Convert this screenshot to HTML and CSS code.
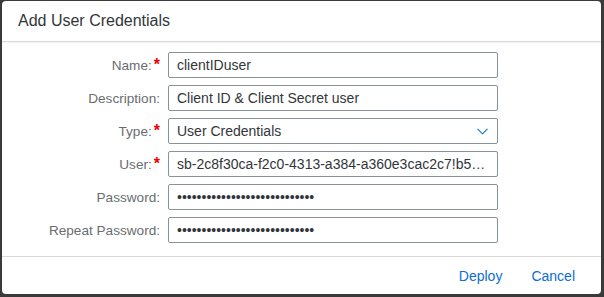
FILE: index.html
```html
<!DOCTYPE html>
<html lang="en">
<head>
    <meta charset="UTF-8">
    <meta name="viewport" content="width=device-width, initial-scale=1.0">
    <title>Add User Credentials</title>
    <link rel="stylesheet" href="styles.css">
</head>
<body>
    <div class="dialog">
        <header class="dialog-header">
            <h1>Add User Credentials</h1>
        </header>

        <section class="form">
            <label class="label">Name:<span class="req">*</span></label>
            <input class="field" type="text" value="clientIDuser" readonly>

            <label class="label">Description:</label>
            <input class="field" type="text" value="Client ID &amp; Client Secret user" readonly>

            <label class="label">Type:<span class="req">*</span></label>
            <div class="field select">
                <span>User Credentials</span>
                <svg class="chevron" width="11" height="7" viewBox="0 0 11 7">
                    <path d="M0.5 0.8 L5.5 5.8 L10.5 0.8" fill="none" stroke="#0a6ed1" stroke-width="1.1"/>
                </svg>
            </div>

            <label class="label">User:<span class="req">*</span></label>
            <input class="field" type="text" value="sb-2c8f30ca-f2c0-4313-a384-a360e3cac2c7!b54321|it-rt-tenant!b117" readonly>

            <label class="label">Password:</label>
            <input class="field" type="password" value="abcdefghijklmnopqrstuvwxyz12" readonly>

            <label class="label">Repeat Password:</label>
            <input class="field" type="password" value="abcdefghijklmnopqrstuvwxyz12" readonly>
        </section>

        <footer class="dialog-footer">
            <button class="btn">Deploy</button>
            <button class="btn">Cancel</button>
        </footer>
    </div>
</body>
</html>
```

FILE: styles.css
```css
html, body {
    margin: 0;
    padding: 0;
    height: 100%;
}

body {
    background-color: #3a3a3a;
    font-family: "Liberation Sans", Arial, sans-serif;
    color: #32363a;
    overflow: hidden;
}

.dialog {
    margin: 1px 3px 3px 2px;
    height: 293px;
    background-color: #fff;
    border-radius: 4px;
    display: flex;
    flex-direction: column;
}

.dialog-header {
    height: 40px;
    padding: 0 16px;
    display: flex;
    align-items: center;
    border-bottom: 1px solid #d9d9d9;
    box-shadow: 0 1px 1px rgba(0, 0, 0, 0.04);
}

.dialog-header h1 {
    margin: 0;
    font-size: 16px;
    font-weight: normal;
    color: #32363a;
}

.form {
    display: grid;
    grid-template-columns: 158px 330px;
    column-gap: 8px;
    row-gap: 7px;
    padding: 10px 0 13px;
    border-bottom: 1px solid #d9d9d9;
}

.label {
    font-size: 13.6px;
    color: #6a6d70;
    text-align: right;
    align-self: center;
    white-space: nowrap;
}

.req {
    color: #e00;
    margin-left: 2px;
    font-size: 16px;
    font-weight: bold;
}

.field {
    box-sizing: border-box;
    height: 26px;
    width: 330px;
    margin: 0;
    padding: 0 8px;
    border: 1px solid #89919a;
    border-radius: 2px;
    background: #fff;
    font-family: "Liberation Sans", Arial, sans-serif;
    font-size: 14px;
    color: #32363a;
    text-overflow: ellipsis;
    outline: none;
}

.select {
    display: flex;
    align-items: center;
    justify-content: space-between;
    padding-right: 9px;
}

.chevron {
    display: block;
}

.dialog-footer {
    flex: 1;
    display: flex;
    justify-content: flex-end;
    align-items: center;
    gap: 13px;
    padding: 0 18px 0 0;
}

.btn {
    background: none;
    border: none;
    padding: 4px 8px;
    font-family: "Liberation Sans", Arial, sans-serif;
    font-size: 14px;
    color: #0a6ed1;
    cursor: pointer;
}
```
